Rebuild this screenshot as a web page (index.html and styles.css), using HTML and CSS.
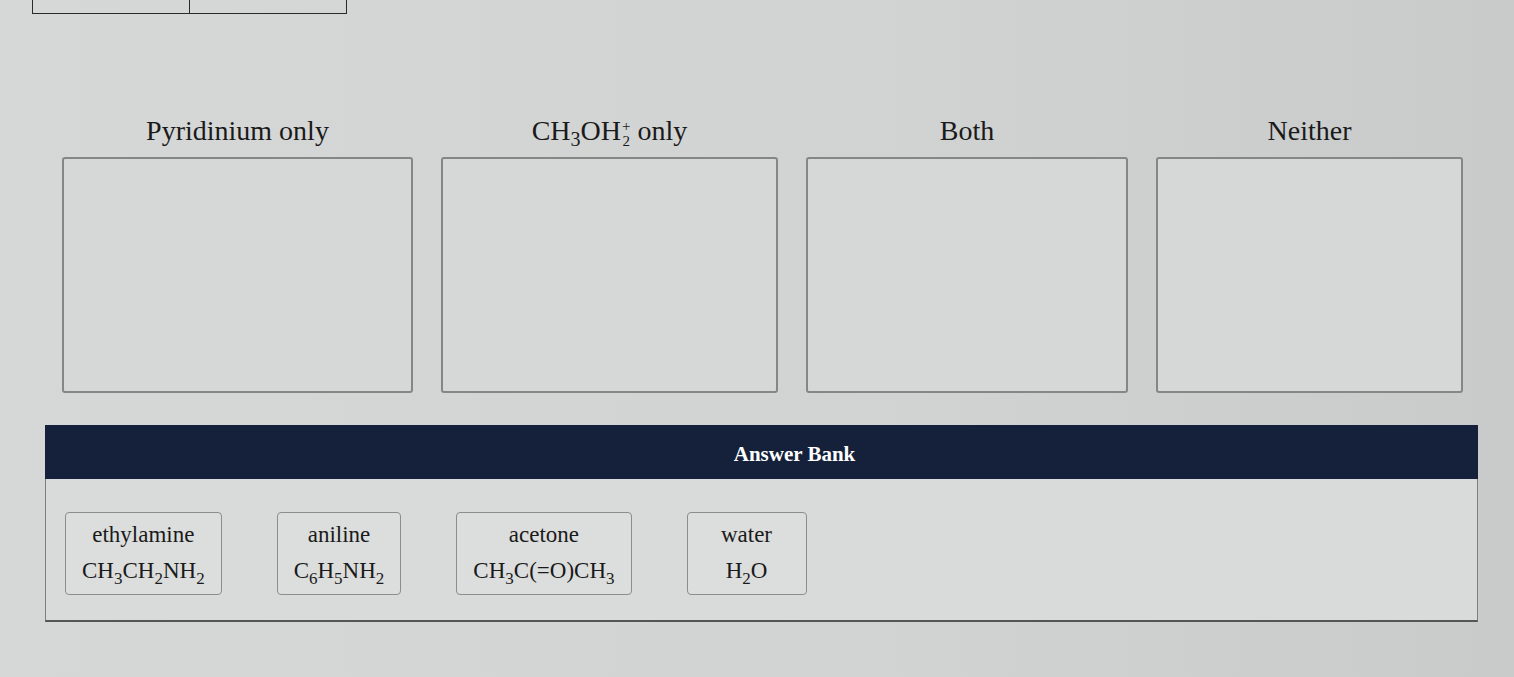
FILE: index.html
```html
<!DOCTYPE html>
<html lang="en">
<head>
  <meta charset="UTF-8" />
  <title>Sort the compounds</title>
  <link rel="stylesheet" href="styles.css">
</head>
<body>
<div class="page">
  <!-- top table fragment -->
  <div class="top-table">
    <div class="cell"></div>
    <div class="cell"></div>
  </div>

  <!-- DROP TARGETS -->
  <div class="targets">
    <div class="target">
      <div class="label">Pyridinium only</div>
      <div class="drop"></div>
    </div>
    <div class="target">
      <div class="label">CH<sub>3</sub>OH<span class="stack"><span>+</span><span>2</span></span> only</div>
      <div class="drop"></div>
    </div>
    <div class="target">
      <div class="label">Both</div>
      <div class="drop"></div>
    </div>
    <div class="target">
      <div class="label">Neither</div>
      <div class="drop"></div>
    </div>
  </div>

  <!-- ANSWER BANK -->
  <div class="bank">
    <div class="bank-head">Answer Bank</div>
    <div class="bank-body">
      <div class="tile">
        <div>ethylamine</div>
        <div>CH<sub>3</sub>CH<sub>2</sub>NH<sub>2</sub></div>
      </div>
      <div class="tile">
        <div>aniline</div>
        <div>C<sub>6</sub>H<sub>5</sub>NH<sub>2</sub></div>
      </div>
      <div class="tile">
        <div>acetone</div>
        <div>CH<sub>3</sub>C(=O)CH<sub>3</sub></div>
      </div>
      <div class="tile">
        <div>water</div>
        <div>H<sub>2</sub>O</div>
      </div>
    </div>
  </div>
</div>
</body>
</html>
```

FILE: styles.css
```css
body {
  margin: 0;
  background: #d3d5d5;
  color: #1a1a1a;
  font-family: "Liberation Serif", "Times New Roman", serif;
}
.page {
  width: 1514px;
  height: 677px;
  overflow: hidden;
  background: linear-gradient(90deg, #d6d8d8 0%, #d1d3d3 60%, #c9cbcb 100%);
}
.top-table {
  display: flex;
  margin-left: 32px;
  width: 313px;
  height: 13px;
  border: 1.5px solid #2a2a2a;
  border-top: none;
}
.top-table .cell {
  flex: 1;
}
.top-table .cell + .cell {
  border-left: 1.5px solid #2a2a2a;
}
.targets {
  display: grid;
  grid-template-columns: 351px 337px 322px 307px;
  gap: 28px;
  margin: 99px 0 0 62px;
}
.target {
  display: flex;
  flex-direction: column;
  align-items: center;
}
.label {
  font-size: 28px;
  height: 36px;
  line-height: 36px;
  margin-bottom: 8px;
  white-space: nowrap;
}
.label sub {
  font-size: 20px;
  vertical-align: -6px;
  line-height: 0;
}
.stack {
  display: inline-block;
  font-size: 15px;
  line-height: 15px;
  vertical-align: -6px;
  margin-left: 1px;
  text-align: center;
}
.stack span {
  display: block;
}
.drop {
  width: 100%;
  height: 236px;
  box-sizing: border-box;
  border: 2px solid #858787;
  border-radius: 3px;
  background: #d6d8d8;
}
.bank {
  margin: 32px 0 0 45px;
  width: 1433px;
}
.bank-head {
  background: #15213a;
  color: #fff;
  font-size: 21px;
  font-weight: bold;
  text-align: center;
  height: 54px;
  line-height: 58px;
  padding-left: 66px;
  box-sizing: border-box;
}
.bank-body {
  display: flex;
  align-items: flex-start;
  gap: 55px;
  height: 143px;
  box-sizing: border-box;
  padding: 33px 19px 0;
  background: #d9dbda;
  border: 1px solid #7d7f7f;
  border-top: none;
  border-bottom: 2px solid #555;
}
.tile {
  display: flex;
  flex-direction: column;
  align-items: center;
  gap: 6px;
  padding: 7px 16px 8px;
  min-width: 86px;
  border: 1.5px solid #8c8e8e;
  border-radius: 4px;
  background: #dcdedd;
  font-size: 23px;
  line-height: 30px;
}
.tile sub {
  font-size: 17px;
  vertical-align: -6px;
  line-height: 0;
}
```
